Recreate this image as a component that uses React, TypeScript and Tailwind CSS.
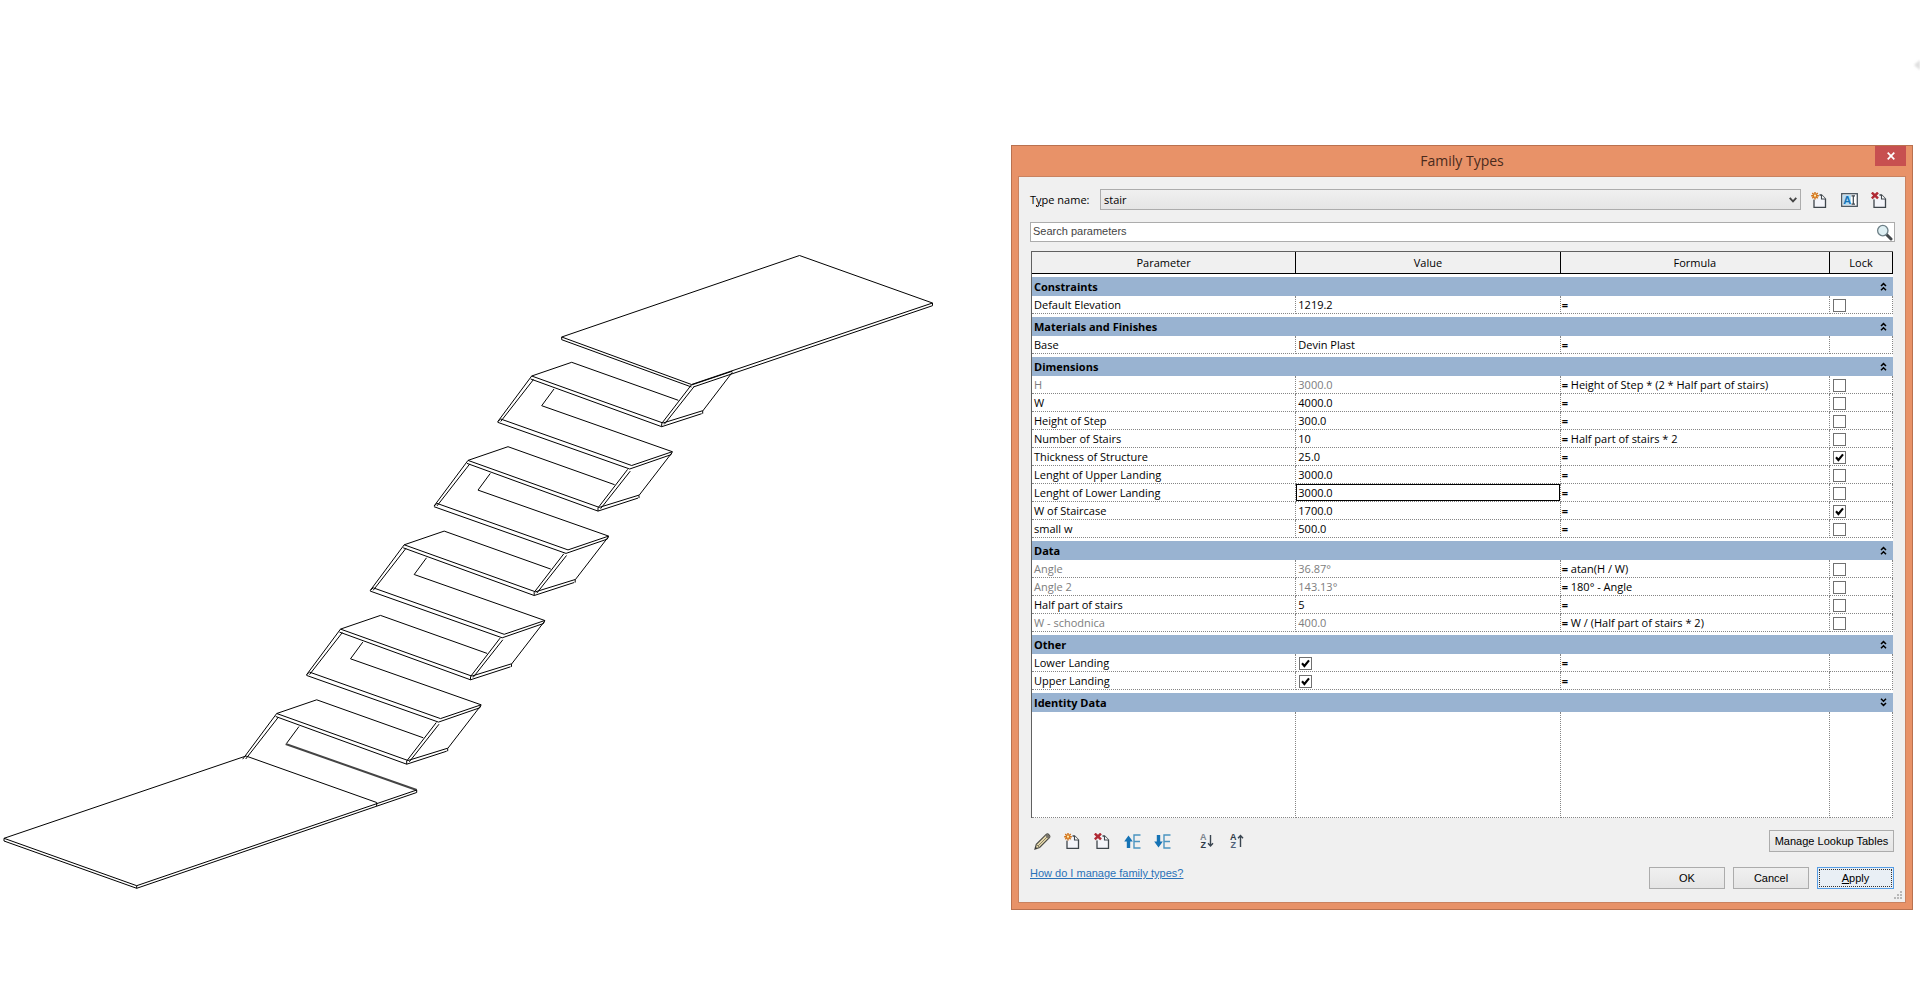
import { useState } from "react";
import type { ReactNode } from "react";

type Row = {
    name: string;
    value: string | boolean;
    formula?: string;
    lock?: boolean;
    muted?: boolean;
    active?: boolean;
};

type Group = {
    title: string;
    collapsed?: boolean;
    rows: Row[];
};

const groups: Group[] = [
    {
        title: "Constraints",
        rows: [{ name: "Default Elevation", value: "1219.2", lock: false }],
    },
    {
        title: "Materials and Finishes",
        rows: [{ name: "Base", value: "Devin Plast" }],
    },
    {
        title: "Dimensions",
        rows: [
            { name: "H", value: "3000.0", formula: "Height of Step * (2 * Half part of stairs)", lock: false, muted: true },
            { name: "W", value: "4000.0", lock: false },
            { name: "Height of Step", value: "300.0", lock: false },
            { name: "Number of Stairs", value: "10", formula: "Half part of stairs * 2", lock: false },
            { name: "Thickness of Structure", value: "25.0", lock: true },
            { name: "Lenght of Upper Landing", value: "3000.0", lock: false },
            { name: "Lenght of Lower Landing", value: "3000.0", lock: false, active: true },
            { name: "W of Staircase", value: "1700.0", lock: true },
            { name: "small w", value: "500.0", lock: false },
        ],
    },
    {
        title: "Data",
        rows: [
            { name: "Angle", value: "36.87°", formula: "atan(H / W)", lock: false, muted: true },
            { name: "Angle 2", value: "143.13°", formula: "180° - Angle", lock: false, muted: true },
            { name: "Half part of stairs", value: "5", lock: false },
            { name: "W - schodnica", value: "400.0", formula: "W / (Half part of stairs * 2)", lock: false, muted: true },
        ],
    },
    {
        title: "Other",
        rows: [
            { name: "Lower Landing", value: true },
            { name: "Upper Landing", value: true },
        ],
    },
    { title: "Identity Data", collapsed: true, rows: [] },
];

const cell = "h-[18px] border-b border-r border-dotted border-[#858585] p-0 leading-4";
const headCell = "h-[22px] border-b border-r border-black p-0 font-normal leading-4";
const pushButton = "h-[22px] border border-[#acacac] bg-linear-to-b from-[#f0f0f0] to-[#e5e5e5] text-center leading-4";

function Check({ label, defaultChecked }: { label: string; defaultChecked: boolean }) {
    const [checked, setChecked] = useState(defaultChecked);
    return (
        <span className="ml-[3px] mt-[2px] grid size-[13px]">
            <input
                type="checkbox"
                aria-label={label}
                checked={checked}
                onChange={(e) => setChecked(e.target.checked)}
                className="col-start-1 row-start-1 size-[13px] appearance-none border border-[#707070] bg-white"
            />
            {checked && (
                <svg viewBox="0 0 13 13" className="pointer-events-none col-start-1 row-start-1 size-[13px]">
                    <path d="M3 6.2 L5.4 9 L10 3.4" fill="none" stroke="#000" strokeWidth="2.1" />
                </svg>
            )}
        </span>
    );
}

function DoubleChevron({ down }: { down?: boolean }) {
    return (
        <svg viewBox="0 0 7 9" className="h-[9px] w-[7px]" fill="none" stroke="#000" strokeWidth="1.5">
            {down ? <path d="M1 .8 L3.5 3.2 L6 .8 M1 5 L3.5 7.4 L6 5" /> : <path d="M1 4 L3.5 1.6 L6 4 M1 8.2 L3.5 5.8 L6 8.2" />}
        </svg>
    );
}

function Page() {
    return (
        <>
            <path d="M3 6.5 V15.3 H14.5 V7 L10.5 3 H8.5" fill="#f4f5fa" stroke="#3f464c" strokeWidth="1.3" />
            <path d="M10.5 3 V7 H14.5" fill="#fff" stroke="#3f464c" strokeWidth="1.1" />
        </>
    );
}

function NewIcon() {
    return (
        <svg viewBox="0 0 16 16" className="size-4">
            <Page />
            <rect x="0" y="0" width="8" height="7.6" fill="#f0f0f0" />
            <path d="M4 0 V2 M4 5.4 V7.4 M.2 3.7 H2.2 M5.8 3.7 H7.8 M1.3 1.1 L2.6 2.4 M5.4 5 L6.7 6.3 M6.7 1.1 L5.4 2.4 M2.6 5 L1.3 6.3" stroke="#cf6f14" strokeWidth="1.4" />
            <circle cx="4" cy="3.7" r="1.7" fill="#fff0b5" stroke="#d9771b" strokeWidth="1.2" />
        </svg>
    );
}

function DeleteIcon() {
    return (
        <svg viewBox="0 0 16 16" className="size-4">
            <Page />
            <rect x="0" y="0" width="8" height="7.4" fill="#f0f0f0" />
            <path d="M.8 .6 L7 6.4 M7 .6 L.8 6.4" stroke="#b02a34" strokeWidth="2.5" />
        </svg>
    );
}

function RenameIcon() {
    return (
        <svg viewBox="0 0 17 14" className="h-[14px] w-[17px]">
            <rect x=".7" y=".7" width="15.6" height="12.6" fill="#fff" stroke="#46525c" strokeWidth="1.3" />
            <rect x="2" y="2" width="8" height="10" fill="#b8def5" />
            <text x="2.3" y="11" fontSize="11" fontWeight="bold" fill="#1673b5" fontFamily="Liberation Sans, sans-serif">A</text>
            <path d="M10.5 2.8 H14 M12.3 2.8 V11.2 M10.5 11.2 H14" stroke="#39434c" strokeWidth="1.2" />
        </svg>
    );
}

function PencilIcon() {
    return (
        <svg viewBox="0 0 17 17" className="size-[17px]">
            <path d="M1 16 L2.3 11.3 L12.2 1.4 Q13.6 .4 15 1.8 Q16.4 3.2 15.4 4.6 L5.6 14.5 Z" fill="#e9dcae" stroke="#4c4c46" strokeWidth="1.2" />
            <path d="M11 2.6 L14.2 5.8 L15.6 4.4 Q16.2 3 14.9 1.9 Q13.6 .8 12.3 1.4 Z" fill="#77746c" />
            <path d="M2.4 11.4 L5.5 14.5 M4 13 L13 4" stroke="#6f6a55" strokeWidth=".8" />
            <path d="M1 16 L1.6 13.8 L3.2 15.3 Z" fill="#333" />
        </svg>
    );
}

function MoveIcon({ down }: { down?: boolean }) {
    return (
        <svg viewBox="0 0 17 15" className="h-[15px] w-[17px]">
            <path
                d={down ? "M2.8 1 H6.2 V7.5 H8.8 L4.5 13.5 L.2 7.5 H2.8 Z" : "M2.8 14 H6.2 V7.5 H8.8 L4.5 1.5 L.2 7.5 H2.8 Z"}
                fill="#1573b5"
            />
            <path d="M16.5 1 H10 V14 H16.5 M10 7.5 H16" fill="none" stroke="#4a94c0" strokeWidth="1.4" />
        </svg>
    );
}

function SortIcon({ up }: { up?: boolean }) {
    return (
        <svg viewBox="0 -3 15 22" className="h-[22px] w-[15px] shrink-0" fontFamily="Liberation Sans, sans-serif" fontWeight="bold" fontSize="9">
            <text x="1" y="7" fill={up ? "#2f3a47" : "#7a838d"}>A</text>
            <text x="1.4" y="15" fill={up ? "#4f6078" : "#2f3a47"}>Z</text>
            <path d={up ? "M11.5 14 V2.5 M9 5.2 L11.5 2.5 L14 5.2" : "M11.5 2 V13 M9 10.3 L11.5 13 L14 10.3"} fill="none" stroke="#3a4550" strokeWidth="1.4" />
        </svg>
    );
}

function IconButton({ label, children }: { label: string; children: ReactNode }) {
    return (
        <button type="button" aria-label={label} className="flex size-[18px] items-center justify-center">
            {children}
        </button>
    );
}

// One tread with its two stringers; every lower one is the same shape shifted down the flight
const tread =
    "M531.7 376 L571.7 362.3 L678.3 400.3 M531.7 376 L663 423 L702.7 410.7 M530.7 379 L661.7 426.7 L701.7 413.7 " +
    "M531.7 376 L497.7 421.7 M533.5 379.5 L500.7 421.5 M554 389 L541.7 405.7 " +
    "M691.3 385 L661.7 423.5 V426.7 M694 386.7 L664.3 424.3";
const link =
    "M500.7 419 L631.7 465.5 L672.3 451.7 L541.7 405.7 M497.7 422.3 L629.7 469 L671 454.7 M497.7 421.7 L500.7 419 M672.3 451.7 L671 454.7";

const flight = [
    "translate(0 0)",
    "translate(-63.7 84.4)",
    "translate(-127.5 168.8)",
    "translate(-191.2 253.1)",
    "translate(-255 337.5)",
];

function Staircase() {
    return (
        <svg viewBox="0 240 1011 660" className="w-full" fill="none" stroke="#000" strokeWidth="1" role="img" aria-label="Staircase">
            <path d="M561.7 337 L799.5 255.5 L932.5 303 L691.5 384.5 Z M561.7 337 V339.7 L691.5 387 M932.5 303 V305.7 L693.3 387" />
            <path d="M691.5 385 L732.3 371.2" />
            <path d="M732.3 372.3 L702.7 411 V413.7" />
            {flight.map((shift, i) => (
                <g key={shift} transform={shift}>
                    <path d={tread} />
                    {i < 4 && <path d={link} />}
                    {i > 0 && <path d="M735.5 368.5 L702.7 411 V413.7" />}
                </g>
            ))}
            <path d="M285.7 744 L416.7 790" stroke="#444" strokeWidth="2" />
            <path d="M246 756 L4 838.3 L136.7 885.7 L416.7 790 M4 838.3 V841 L136.7 888.3 L416.7 792.5 V790 M136.7 885.7 V888.3" />
            <path d="M246 756 L376.7 802.5 V806" />
        </svg>
    );
}

function ParameterTable() {
    return (
        <table className="ml-px w-[calc(100%-3px)] table-fixed border-separate border-spacing-0 border-l border-t border-[#606060] bg-white">
            <colgroup>
                <col className="w-[30.7%]" />
                <col className="w-[30.7%]" />
                <col className="w-[31.3%]" />
                <col />
            </colgroup>
            <thead className="bg-[#f0f0f0]">
                <tr>
                    <th className={headCell}>Parameter</th>
                    <th className={headCell}>Value</th>
                    <th className={headCell}>Formula</th>
                    <th className={headCell}>Lock</th>
                </tr>
            </thead>
            {groups.map((group) => (
                <tbody key={group.title}>
                    <tr>
                        <th colSpan={4} scope="colgroup" className="h-[22px] border-t-3 border-white bg-[#99b3d1] p-0 text-left leading-4">
                            <div className="flex items-center justify-between pl-[2px] pr-[6px]">
                                <span>{group.title}</span>
                                <button type="button" aria-label={`Toggle ${group.title}`}>
                                    <DoubleChevron down={group.collapsed} />
                                </button>
                            </div>
                        </th>
                    </tr>
                    {group.rows.map((row) => (
                        <tr key={row.name}>
                            <td className={`${cell} pl-[2px] ${row.muted ? "text-[#7d7d7d]" : ""}`}>{row.name}</td>
                            <td className={`${cell} ${row.muted ? "text-[#7d7d7d]" : ""}`}>
                                {typeof row.value === "boolean" ? (
                                    <Check label={row.name} defaultChecked={row.value} />
                                ) : row.active ? (
                                    <input
                                        aria-label={row.name}
                                        defaultValue={row.value}
                                        className="block h-[17px] w-full border border-black pl-px leading-4 outline-none"
                                    />
                                ) : (
                                    <span className="pl-[2px]">{row.value}</span>
                                )}
                            </td>
                            <td className={cell}>
                                <b className="pl-px">=</b> {row.formula}
                            </td>
                            <td className={cell}>
                                {row.lock !== undefined && <Check label={`Lock ${row.name}`} defaultChecked={row.lock} />}
                            </td>
                        </tr>
                    ))}
                </tbody>
            ))}
            <tbody>
                <tr>
                    <td className={`${cell} h-[106px]`} />
                    <td className={`${cell} h-[106px]`} />
                    <td className={`${cell} h-[106px]`} />
                    <td className={`${cell} h-[106px]`} />
                </tr>
            </tbody>
        </table>
    );
}

function FamilyTypesDialog() {
    return (
        <section role="dialog" aria-labelledby="dialog-title" className="border border-[#b9714f] bg-[#e89268] px-[6px] pb-[6px]">
            <header className="grid h-[30px] grid-cols-[31px_1fr_31px] items-start">
                <h1 id="dialog-title" className="col-start-2 pt-[5px] text-center font-['Open_Sans',sans-serif] text-[14px] leading-5 text-[#4a2a1c]">
                    Family Types
                </h1>
                <button type="button" aria-label="Close" className="flex h-5 items-center justify-center bg-[#c75050]">
                    <svg viewBox="0 0 8 8" className="size-2">
                        <path d="M.7 .7 L7.3 7.3 M7.3 .7 L.7 7.3" stroke="#fff" strokeWidth="1.7" />
                    </svg>
                </button>
            </header>

            <div className="relative border border-[#c98260] bg-[#f0f0f0] pb-[13px] pl-[11px] pr-[10px] pt-3">
                <div className="flex items-center">
                    <label htmlFor="type-name" className="w-[70px] leading-4">
                        T<u>y</u>pe name:
                    </label>
                    <div className="grid flex-1 items-center">
                        <select
                            id="type-name"
                            className="col-start-1 row-start-1 h-[21px] appearance-none border border-[#acacac] bg-linear-to-b from-[#f0f0f0] to-[#e5e5e5] pl-[3px] leading-4"
                        >
                            <option>stair</option>
                        </select>
                        <svg viewBox="0 0 8 6" className="pointer-events-none col-start-1 row-start-1 mr-1 h-[6px] w-2 justify-self-end">
                            <path d="M.7 .8 L4 4.4 L7.3 .8" fill="none" stroke="#444" strokeWidth="1.8" />
                        </svg>
                    </div>
                    <div className="ml-[9px] mr-[7px] flex gap-3">
                        <IconButton label="New type"><NewIcon /></IconButton>
                        <IconButton label="Rename type"><RenameIcon /></IconButton>
                        <IconButton label="Delete type"><DeleteIcon /></IconButton>
                    </div>
                </div>

                <div className="mt-3 flex h-5 items-center border border-[#acacac] bg-white">
                    <input
                        type="text"
                        aria-label="Search parameters"
                        placeholder="Search parameters"
                        className="h-[18px] min-w-0 flex-1 pb-[2px] pl-[2px] font-['Liberation_Sans',sans-serif] leading-4 outline-none placeholder:text-[#444]"
                    />
                    <button type="button" aria-label="Search" className="mr-px">
                        <svg viewBox="0 0 17 17" className="size-[17px]">
                            <path d="M10.3 10.3 L15 15" stroke="#44484b" strokeWidth="3" strokeLinecap="round" />
                            <circle cx="6.8" cy="6.6" r="5.2" fill="#deeff3" stroke="#6d7f86" strokeWidth="1.3" />
                        </svg>
                    </button>
                </div>

                <div className="mt-[9px]">
                    <ParameterTable />
                </div>

                <div className="mr-px mt-3 flex items-center">
                    <div className="ml-[3px] flex gap-3">
                        <IconButton label="Edit parameter"><PencilIcon /></IconButton>
                        <IconButton label="New parameter"><NewIcon /></IconButton>
                        <IconButton label="Delete parameter"><DeleteIcon /></IconButton>
                        <IconButton label="Move up"><MoveIcon /></IconButton>
                        <IconButton label="Move down"><MoveIcon down /></IconButton>
                    </div>
                    <div className="ml-[26px] flex gap-3">
                        <IconButton label="Sort ascending"><SortIcon /></IconButton>
                        <IconButton label="Sort descending"><SortIcon up /></IconButton>
                    </div>
                    <button type="button" className={`${pushButton} ml-auto w-[125px] font-['Liberation_Sans',sans-serif]`}>
                        Mana<u>g</u>e Lookup Tables
                    </button>
                </div>

                <div className="mr-px mt-[15px] flex items-start gap-2 font-['Liberation_Sans',sans-serif]">
                    <a href="#help" className="mr-auto leading-3 text-[#2a72b8] underline">
                        How do I manage family types?
                    </a>
                    <button type="button" className={`${pushButton} w-[76px]`}>OK</button>
                    <button type="button" className={`${pushButton} w-[76px]`}>Cancel</button>
                    <button type="button" className="h-[22px] w-[77px] border border-[#569de5] bg-[#e9eff5] p-px leading-4">
                        <span className="block border border-dotted border-[#333]">
                            <u>A</u>pply
                        </span>
                    </button>
                </div>

                <svg viewBox="0 0 9 9" className="absolute bottom-[2px] right-[2px] size-[9px]" fill="#b8b8b8">
                    <path d="M6 0 h2 v2 h-2z M6 3 h2 v2 h-2z M6 6 h2 v2 h-2z M3 3 h2 v2 h-2z M3 6 h2 v2 h-2z M0 6 h2 v2 h-2z" />
                </svg>
            </div>
        </section>
    );
}

export default function App() {
    return (
        <main className="relative grid min-h-screen grid-cols-[1011fr_902fr] items-start bg-white pr-[7px] font-['Open_Sans',sans-serif] text-[11px] text-black">
            <div className="min-w-0 pt-60">
                <Staircase />
            </div>
            <div className="min-w-0 pt-[145px]">
                <FamilyTypesDialog />
            </div>
            <svg viewBox="0 0 8 16" className="absolute right-0 top-[57px] h-4 w-2">
                <path d="M8 3 L2 8 L8 13 Z" fill="#dedede" className="blur-[1px]" />
            </svg>
        </main>
    );
}
